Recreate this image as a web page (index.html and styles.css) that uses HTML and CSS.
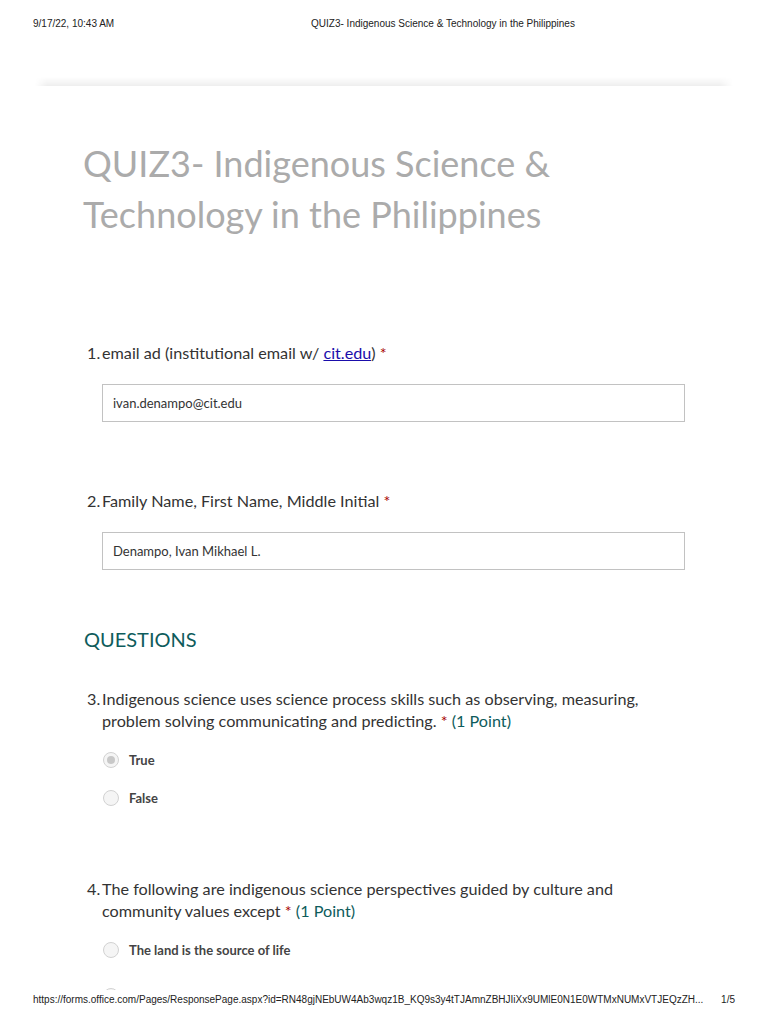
FILE: index.html
```html
<!DOCTYPE html>
<html lang="en">
<head>
  <meta charset="UTF-8" />
  <meta name="viewport" content="width=device-width, initial-scale=1.0"/>
  <title>QUIZ3- Indigenous Science &amp; Technology in the Philippines</title>
  <link rel="stylesheet" href="styles.css">
</head>
<body>

  <header class="print-header">
    <span class="print-date">9/17/22, 10:43 AM</span>
    <span class="print-title">QUIZ3- Indigenous Science &amp; Technology in the Philippines</span>
  </header>

  <div class="sheet">
    <div class="card-edge"></div>

    <div class="form">
      <h1 class="form-title">QUIZ3- Indigenous Science &amp; Technology in the Philippines</h1>

      <!-- Question 1 -->
      <div class="question">
        <div class="q-head">
          <span class="q-num">1.</span>
          <span class="q-text">email ad (institutional email w/ <a href="#">cit.edu</a>) <span class="req">*</span></span>
        </div>
        <div class="answer-box">ivan.denampo@cit.edu</div>
      </div>

      <!-- Question 2 -->
      <div class="question">
        <div class="q-head">
          <span class="q-num">2.</span>
          <span class="q-text">Family Name, First Name, Middle Initial <span class="req">*</span></span>
        </div>
        <div class="answer-box">Denampo, Ivan Mikhael L.</div>
      </div>

      <h2 class="section-title">QUESTIONS</h2>

      <!-- Question 3 -->
      <div class="question choice">
        <div class="q-head">
          <span class="q-num">3.</span>
          <span class="q-text">Indigenous science uses science process skills such as observing, measuring, problem solving communicating and predicting. <span class="req">*</span> <span class="points">(1 Point)</span></span>
        </div>
        <label class="option"><input type="radio" name="q3" checked disabled /> True</label>
        <label class="option"><input type="radio" name="q3" disabled /> False</label>
      </div>

      <!-- Question 4 -->
      <div class="question choice">
        <div class="q-head">
          <span class="q-num">4.</span>
          <span class="q-text">The following are indigenous science perspectives guided by culture and community values except <span class="req">*</span> <span class="points">(1 Point)</span></span>
        </div>
        <label class="option"><input type="radio" name="q4" disabled /> The land is the source of life</label>
        <label class="option"><input type="radio" name="q4" disabled /> The nature is the source of knowledge</label>
      </div>
    </div>
  </div>

  <footer class="print-footer">
    <span class="print-url">https://forms.office.com/Pages/ResponsePage.aspx?id=RN48gjNEbUW4Ab3wqz1B_KQ9s3y4tTJAmnZBHJIiXx9UMlE0N1E0WTMxNUMxVTJEQzZH...</span>
    <span class="print-page">1/5</span>
  </footer>

</body>
</html>
```

FILE: styles.css
```css
body {
  margin: 0;
  background-color: white;
  color: #333;
  font-family: Lato, "Open Sans", sans-serif;
}

/* browser print header / footer */
.print-header,
.print-footer {
  font-family: "Liberation Sans", Arial, sans-serif;
  font-size: 10px;
  line-height: 12px;
  color: #222;
  padding: 0 33px;
}

.print-header {
  position: relative;
  height: 12px;
  padding-top: 18px;
}

.print-title {
  position: absolute;
  left: 0;
  right: 0;
  top: 18px;
  text-align: center;
  padding-left: 118px;
}

.print-footer {
  display: flex;
  justify-content: space-between;
  margin-top: 4px;
}

/* page body, cut off where the printed page ends */
.sheet {
  height: 960px;
  overflow: hidden;
}

.card-edge {
  height: 9px;
  margin: 47px 35px 0;
  background: linear-gradient(to bottom, rgba(255,255,255,0), rgba(0,0,0,0.065));
  -webkit-mask-image: linear-gradient(to right, transparent, black 12px, black 98%, transparent);
}

.form {
  padding: 52px 83px 0 87px;
}

.form-title {
  margin: 0 0 0 -4px;
  font-size: 36px;
  line-height: 51px;
  font-weight: 400;
  color: #ababab;
  max-width: 520px;
}

.question {
  margin-top: 102px;
}

.question + .question {
  margin-top: 68px;
}

.q-head {
  display: flex;
  font-size: 16.2px;
  line-height: 22px;
}

.q-num {
  flex: 0 0 15px;
}

.q-text {
  flex: 1;
}

.q-text a {
  color: #1a0dab;
}

.req {
  color: #a80000;
}

.points {
  color: #0e5c5c;
}

.answer-box {
  margin: 20px 0 0 15px;
  height: 36px;
  line-height: 36px;
  border: 1px solid #c2c2c2;
  padding: 0 10px;
  font-size: 13px;
}

.section-title {
  margin: 55px 0 0 -3px;
  font-size: 20px;
  line-height: 28px;
  font-weight: 400;
  color: #0e5c5c;
}

.section-title + .question {
  margin-top: 35px;
}

.choice .q-head {
  margin-bottom: 16px;
}

.option {
  display: flex;
  align-items: center;
  height: 24px;
  margin: 0 0 14px 16px;
  font-size: 13px;
  font-weight: 700;
  color: #444;
}

.question:last-child .option:last-child {
  margin-top: 22px;
}

.option input {
  appearance: none;
  -webkit-appearance: none;
  width: 16px;
  height: 16px;
  margin: 0 10px 0 0;
  border: 1px solid #d2d2d2;
  border-radius: 50%;
  background-color: #f5f5f5;
  display: grid;
  place-items: center;
}

.option input:checked::before {
  content: "";
  width: 8px;
  height: 8px;
  border-radius: 50%;
  background-color: #c8c8c8;
}
```
